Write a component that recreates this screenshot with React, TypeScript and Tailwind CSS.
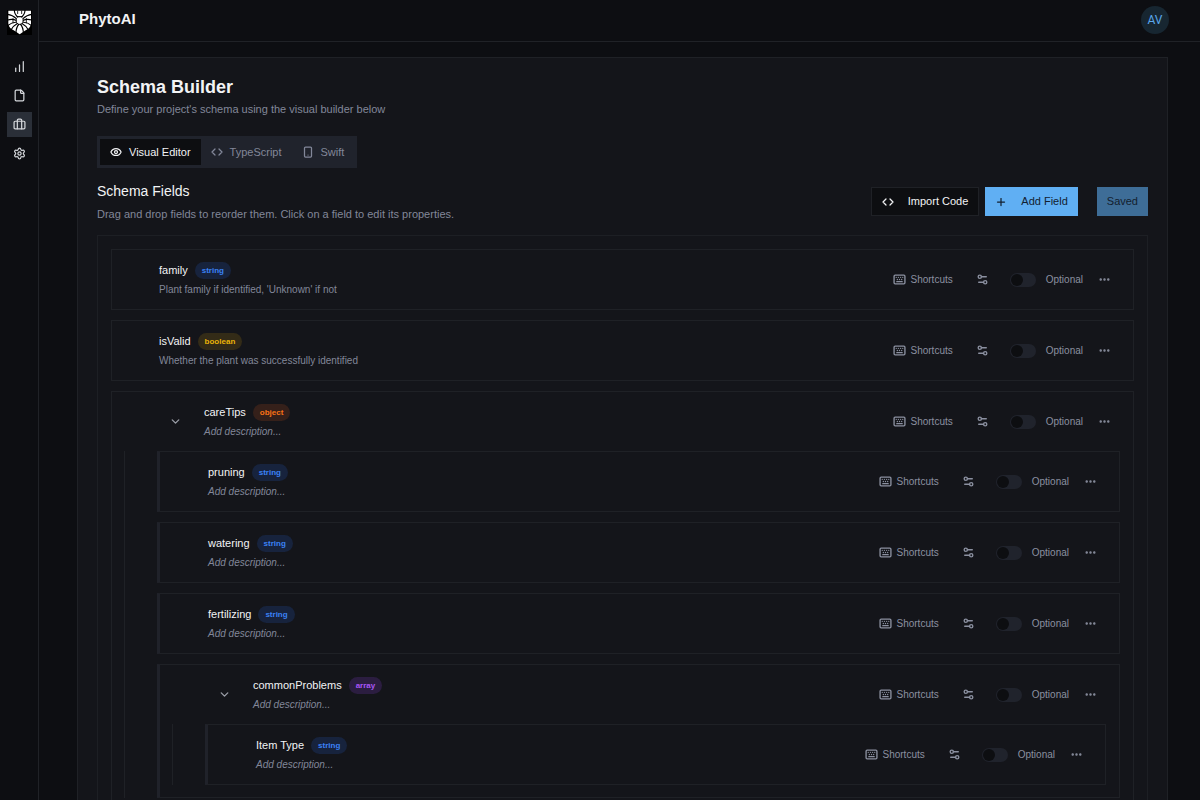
import { useState } from "react";
import {
  Briefcase,
  ChartNoAxesColumnIncreasing,
  ChevronDown,
  Code,
  Ellipsis,
  Eye,
  File,
  Keyboard,
  Plus,
  Settings,
  Settings2,
  Smartphone,
} from "lucide-react";

type FieldType = "string" | "boolean" | "object" | "array";

interface Field {
  name: string;
  type: FieldType;
  description?: string;
  children?: Field[];
}

const fields: Field[] = [
  { name: "family", type: "string", description: "Plant family if identified, 'Unknown' if not" },
  { name: "isValid", type: "boolean", description: "Whether the plant was successfully identified" },
  {
    name: "careTips",
    type: "object",
    children: [
      { name: "pruning", type: "string" },
      { name: "watering", type: "string" },
      { name: "fertilizing", type: "string" },
      { name: "commonProblems", type: "array", children: [{ name: "Item Type", type: "string" }] },
    ],
  },
];

const badgeColors: Record<FieldType, string> = {
  string: "bg-[#17233d] text-[#3b82f6]",
  boolean: "bg-[#332b17] text-[#eab308]",
  object: "bg-[#35201a] text-[#f97316]",
  array: "bg-[#2b1d40] text-[#a855f7]",
};

const navItems = [
  { label: "Analytics", icon: ChartNoAxesColumnIncreasing },
  { label: "Documents", icon: File },
  { label: "Projects", icon: Briefcase },
  { label: "Settings", icon: Settings },
];

const tabs = [
  { label: "Visual Editor", icon: Eye },
  { label: "TypeScript", icon: Code },
  { label: "Swift", icon: Smartphone },
];

export default function App() {
  const [activeTab, setActiveTab] = useState("Visual Editor");

  return (
    <div className="flex h-screen overflow-hidden bg-[#0d0e12] font-['Liberation_Sans',Arial,sans-serif] text-[11px] text-[#f2f3f5]">
      <Sidebar />

      <div className="flex min-w-0 flex-1 flex-col">
        <header className="flex h-[42px] shrink-0 items-center justify-between border-b border-[#202227] pr-[31px] pb-[2px] pl-10">
          <span className="text-[15px] font-bold">PhytoAI</span>
          <button className="size-7 rounded-full bg-[#172631] font-['Roboto',sans-serif] text-[12px] text-[#5aa7ea]">
            AV
          </button>
        </header>

        <main className="min-h-0 flex-1 overflow-y-auto pt-[15px] pr-8 pb-8 pl-[38px] [scrollbar-width:none]">
          <div className="border border-[#1f2126] bg-[#14151a] p-[19px]">
            <h1 className="text-[18px] leading-5 font-bold">Schema Builder</h1>
            <p className="mt-1 leading-4 text-[#828799]">
              Define your project's schema using the visual builder below
            </p>

            <div role="tablist" className="mt-[19px] inline-flex bg-[#20232c] p-[3px] align-top">
              {tabs.map(({ label, icon: Icon }) => (
                <button
                  key={label}
                  role="tab"
                  aria-selected={activeTab === label}
                  onClick={() => setActiveTab(label)}
                  className={`flex h-[26px] items-center gap-[7px] px-[10px] ${
                    activeTab === label ? "bg-[#0d0e11] text-[#f2f3f5]" : "text-[#828799]"
                  }`}
                >
                  <Icon size={12} strokeWidth={2.5} />
                  {label}
                </button>
              ))}
            </div>

            <div className="mt-[13px] flex items-center justify-between">
              <div>
                <h2 className="text-[14px] leading-5">Schema Fields</h2>
                <p className="mt-[5px] leading-4 text-[#828799]">
                  Drag and drop fields to reorder them. Click on a field to edit its properties.
                </p>
              </div>
              <div className="flex">
                <button className="flex h-[29px] items-center gap-[14px] border border-[#1f2126] bg-[#0d0e11] px-[10px]">
                  <Code size={12} strokeWidth={2.5} />
                  Import Code
                </button>
                <button className="ml-[6px] flex h-[29px] items-center gap-[14px] bg-[#60aff3] px-[10px] text-[#122130]">
                  <Plus size={12} strokeWidth={2.5} />
                  Add Field
                </button>
                <button disabled className="ml-[19px] h-[29px] bg-[#3e6d97] px-[10px] text-[#13202e]">
                  Saved
                </button>
              </div>
            </div>

            <div className="mt-[13px] flex flex-col gap-[10px] border border-[#1d1f24] p-[13px]">
              {fields.map((field) => (
                <FieldCard key={field.name} field={field} />
              ))}
            </div>
          </div>
        </main>
      </div>
    </div>
  );
}

const Sidebar = () => (
  <aside className="flex w-[39px] shrink-0 flex-col items-center border-r border-[#202227] pt-[10px]">
    <Logo />
    <nav className="mt-[19px] flex flex-col gap-1">
      {navItems.map(({ label, icon: Icon }) => (
        <a
          key={label}
          href="#"
          aria-label={label}
          className={`flex size-[25px] items-center justify-center text-[#d5d8dc] ${
            label === "Projects" ? "bg-[#2a2f38]" : ""
          }`}
        >
          <Icon size={13} strokeWidth={2.25} />
        </a>
      ))}
    </nav>
  </aside>
);

// Shield cut into petals around a solid core
const Logo = () => (
  <svg viewBox="0 0 75 75" className="size-[25px] bg-black" aria-hidden="true">
    <path d="M4 2 H72 V42 C70 53 64 57 56 61 L38 73 L20 61 C12 57 6 53 4 42 Z" fill="#fff" />
    <g stroke="#000" strokeWidth="3.5" fill="none">
      <path d="M22 0 C22 10 26 16 33 22 M54 0 C54 10 50 16 43 22" />
      <path d="M29 20 H47" />
      <path d="M2 13 C12 14 20 18 28 26 M74 13 C64 14 56 18 48 26" />
      <path d="M2 30 C12 27 20 28 28 31 M74 30 C64 27 56 28 48 31" />
      <path d="M2 47 C10 40 18 37 29 36 M74 47 C66 40 58 37 47 36" />
      <path d="M12 60 C17 51 23 45 32 40 M64 60 C59 51 53 45 44 40" />
      <path d="M27 69 C27 58 30 49 36 42 M49 69 C49 58 46 49 40 42" />
      <path d="M32 2 V12 M44 2 V12 M18 24 V40 M58 24 V40" strokeWidth="2.5" />
      <path d="M28 24 V38 L34 43 H42 L48 38 V24" strokeWidth="2.5" />
    </g>
  </svg>
);

const FieldCard = ({ field, nested = false }: { field: Field; nested?: boolean }) => (
  <div className={`border border-[#1f2126] ${nested ? "border-l-[3px] border-l-[#20222a]" : ""}`}>
    <div className={`flex h-[59px] items-center pr-[13px] ${nested ? "pl-12" : "pl-[47px]"}`}>
      {field.children && (
        <button aria-label="Collapse" className="mr-[13px] flex size-8 items-center justify-center text-[#9a9da6]">
          <ChevronDown size={13} strokeWidth={2.5} />
        </button>
      )}
      <div className="flex-1">
        <div className="flex h-[17px] items-center gap-[7px]">
          <span>{field.name}</span>
          <span className={`rounded-full px-[7px] text-[8px] leading-[17px] font-bold ${badgeColors[field.type]}`}>
            {field.type}
          </span>
        </div>
        <p className={`mt-[3px] text-[10px] leading-4 text-[#828799] ${field.description ? "" : "italic"}`}>
          {field.description ?? "Add description..."}
        </p>
      </div>
      <FieldActions />
    </div>

    {field.children && (
      <div className="mr-[13px] mb-3 ml-3 flex flex-col gap-[10px] border-l border-[#1f2126] pl-8">
        {field.children.map((child) => (
          <FieldCard key={child.name} field={child} nested />
        ))}
      </div>
    )}
  </div>
);

const FieldActions = () => (
  <div className="flex items-center text-[10px] text-[#8b90a0]">
    <button className="flex h-6 items-center gap-[5px] px-2">
      <Keyboard size={13} strokeWidth={2.5} />
      Shortcuts
    </button>
    <button aria-label="Field options" className="ml-[6px] flex size-8 items-center justify-center">
      <Settings2 size={13} strokeWidth={2.5} />
    </button>
    <label className="ml-[11px] flex items-center gap-[10px]">
      <input
        type="checkbox"
        className="h-[14px] w-[26px] appearance-none rounded-full bg-[#20232c] p-px before:block before:size-3 before:rounded-full before:bg-[#0d0e11] checked:bg-[#60aff3] checked:before:ml-3"
      />
      Optional
    </label>
    <button aria-label="More" className="ml-[5px] flex size-8 items-center justify-center">
      <Ellipsis size={13} strokeWidth={2.5} />
    </button>
  </div>
);
